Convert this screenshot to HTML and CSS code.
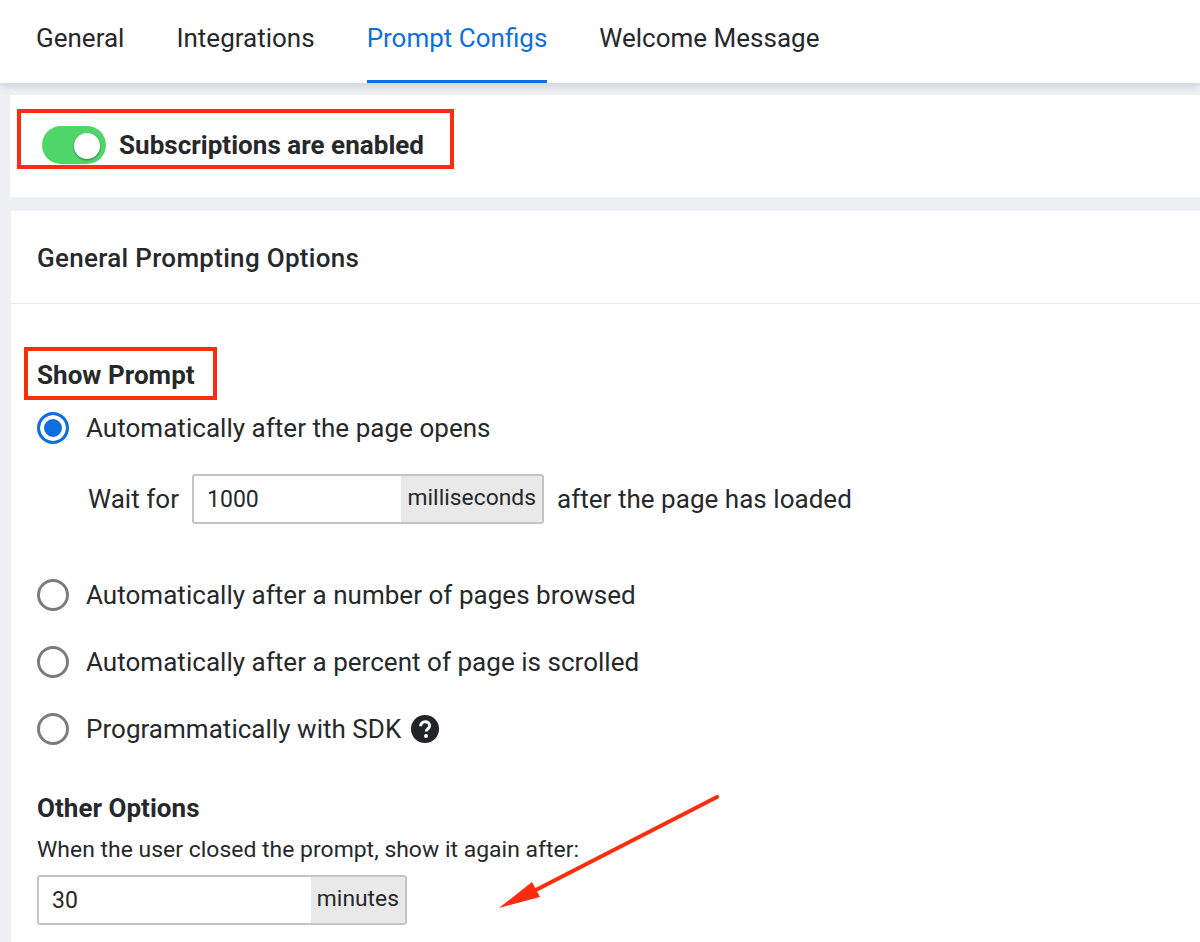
FILE: index.html
```html
<!doctype html>
<html>
    <head>
        <meta charset="utf-8">
        <title>Prompt Configs</title>
        <link rel="stylesheet" href="styles.css">
    </head>
    <body>
        <div class="tabs">
            <a class="tab">General</a>
            <a class="tab">Integrations</a>
            <a class="tab active">Prompt Configs</a>
            <a class="tab">Welcome Message</a>
        </div>

        <div class="card switch-card">
            <div class="note-box switch-note">
                <span class="switch"><span class="knob"></span></span>
                <span class="switch-text">Subscriptions are enabled</span>
            </div>
        </div>

        <div class="card options-card">
            <div class="card-head">General Prompting Options</div>
            <div class="card-body">
                <div class="note-box title-note">
                    <div class="sub-title">Show Prompt</div>
                </div>

                <div class="radio-row first">
                    <span class="radio on"></span>
                    <span>Automatically after the page opens</span>
                </div>
                <div class="wait-row">
                    <span>Wait for</span>
                    <div class="input-group wide">
                        <div class="input-value">1000</div>
                        <div class="input-addon">milliseconds</div>
                    </div>
                    <span>after the page has loaded</span>
                </div>
                <div class="radio-row">
                    <span class="radio"></span>
                    <span>Automatically after a number of pages browsed</span>
                </div>
                <div class="radio-row">
                    <span class="radio"></span>
                    <span>Automatically after a percent of page is scrolled</span>
                </div>
                <div class="radio-row">
                    <span class="radio"></span>
                    <span>Programmatically with SDK</span>
                    <svg class="help" viewBox="0 0 28 28">
                        <circle cx="14" cy="14" r="14" fill="#222426"/>
                        <path d="M9.6 11.2c0-2.7 2-4.4 4.6-4.4 2.500 0 4.400 1.600 4.400 3.900 0 3.100-3.300 3.300-3.300 5.800" fill="none" stroke="#fff" stroke-width="3"/>
                        <circle cx="15" cy="21" r="2" fill="#fff"/>
                    </svg>
                </div>

                <div class="sub-title other">Other Options</div>
                <div class="hint">When the user closed the prompt, show it again after:</div>
                <div class="input-group narrow">
                    <div class="input-value">30</div>
                    <div class="input-addon">minutes</div>
                </div>
            </div>
        </div>

        <svg class="arrow" viewBox="0 0 240 130" width="240" height="130">
            <path d="M237 2 L50 98" fill="none" stroke="#fb2d0c" stroke-width="4" stroke-linecap="round"/>
            <path d="M19 113 L52 87 L60 102 Z" fill="#fb2d0c"/>
        </svg>
    </body>
</html>
```
FILE: styles.css
```css
*{
    margin: 0;
    padding: 0;
    box-sizing: border-box;
}
body{
    height: 942px;
    overflow: hidden;
    position: relative;
    background-color: #eff0f4;
    color: #26282b;
    font-family: Roboto, "Liberation Sans", sans-serif;
    font-size: 26px;
    letter-spacing: 0.03px;
}
.tabs{
    height: 83px;
    padding-left: 36px;
    display: flex;
    gap: 52px;
    background-color: #fff;
    box-shadow: 0 3px 8px rgba(60, 64, 80, 0.2);
    position: relative;
}
.tab{
    height: 83px;
    padding-top: 22px;
    font-size: 26px;
    letter-spacing: 0;
    line-height: 32px;
}
.tab.active{
    color: #0f6fde;
    border-bottom: 3px solid #0f6fde;
}
.card{
    background-color: #fff;
}
.switch-card{
    height: 102px;
    margin: 12px 0 14px 10px;
    padding: 14px 0 0 7px;
}
.note-box{
    border: 4px solid #fb2d0c;
}
.switch-note{
    width: 437px;
    height: 60px;
    padding: 13px 0 0 21px;
    display: flex;
    align-items: flex-start;
    gap: 13px;
}
.switch{
    width: 64px;
    height: 38px;
    border-radius: 19px;
    background-color: #4fd669;
    position: relative;
    flex: none;
}
.knob{
    position: absolute;
    top: 7px;
    left: 32px;
    width: 26px;
    height: 26px;
    border-radius: 50%;
    background-color: #fff;
    box-shadow: 0 1px 2px rgba(0, 0, 0, 0.45);
}
.switch-text{
    font-size: 26px;
    font-weight: 700;
    line-height: 38px;
}
.options-card{
    margin-left: 11px;
    height: 731px;
}
.card-head{
    height: 93px;
    padding: 31px 0 0 26px;
    font-size: 26px;
    font-weight: 500;
    letter-spacing: 0.3px;
    line-height: 32px;
    border-bottom: 1px solid #e8e9ec;
}
.card-body{
    padding: 43px 0 0 26px;
}
.title-note{
    width: 193px;
    height: 53px;
    margin-left: -13px;
    padding: 9px 0 0 9px;
}
.sub-title{
    font-weight: 700;
    font-size: 26px;
    line-height: 30px;
}
.radio-row{
    height: 34px;
    margin-top: 33px;
    display: flex;
    align-items: center;
    gap: 17px;
}
.radio-row.first{
    margin-top: 11px;
}
.radio{
    width: 32px;
    height: 32px;
    border-radius: 50%;
    border: 3px solid #7c7c7c;
    background-color: #fff;
    flex: none;
}
.radio.on{
    border-color: #0f6fde;
    background-color: #0f6fde;
    box-shadow: inset 0 0 0 4px #fff;
}
.help{
    width: 28px;
    height: 28px;
    margin-left: -7px;
}
.wait-row{
    margin: 29px 0 54px 51px;
    display: flex;
    align-items: center;
    gap: 13px;
}
.input-group{
    display: flex;
    height: 50px;
    border: 2px solid #c4c4c4;
    border-radius: 3px;
    background-color: #fff;
}
.input-group.wide{
    width: 352px;
}
.input-group.narrow{
    width: 370px;
}
.input-value{
    flex: 1;
    padding-left: 13px;
    line-height: 48px;
    font-size: 23px;
}
.input-addon{
    padding: 0 6px;
    background-color: #e9e9e9;
    font-size: 22.800px;
    line-height: 44px;
}
.other{
    margin-top: 47px;
}
.hint{
    margin: 13px 0 11px;
    font-size: 22.900px;
    line-height: 28px;
}
.arrow{
    position: absolute;
    left: 480px;
    top: 795px;
}
```
